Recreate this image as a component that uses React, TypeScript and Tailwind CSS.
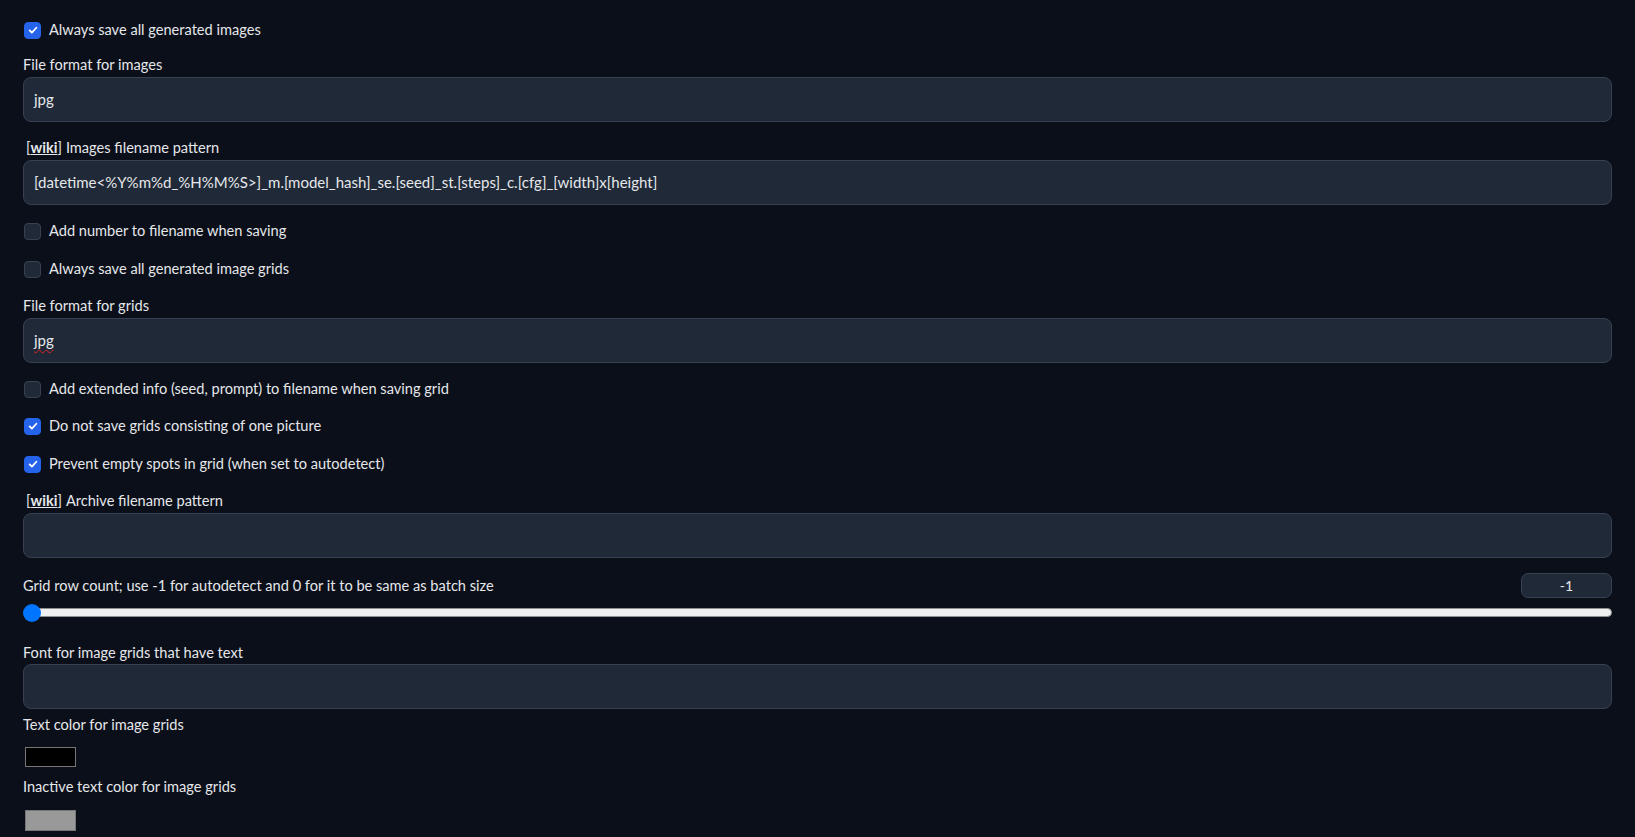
import React, { useState } from 'react';

const font = { fontFamily: '"Source Sans Pro", Lato, "Noto Sans", sans-serif' };

const Check: React.FC<{ label: string; checked?: boolean; className?: string }> = ({ label, checked, className }) => {
  const [on, setOn] = useState(!!checked);
  return (
    <label className={`flex h-[22px] items-center gap-[8px] cursor-pointer ${className ?? ''}`} onClick={() => setOn(!on)}>
      <span
        className={`flex h-[17px] w-[17px] ml-[1px] items-center justify-center rounded-[4px] border ${
          on ? 'bg-[#2563eb] border-[#2563eb]' : 'bg-[#1f2937] border-[#374151]'
        }`}
      >
        {on && (
          <svg viewBox="0 0 16 16" className="h-[12px] w-[12px]" fill="none" stroke="white" strokeWidth="2.4" strokeLinecap="round" strokeLinejoin="round">
            <path d="M3.5 8.5l3 3 6-6.5" />
          </svg>
        )}
      </span>
      <span className="text-[14.6px] text-[#e5e7eb]">{label}</span>
    </label>
  );
};

const Label: React.FC<{ children: React.ReactNode; className?: string }> = ({ children, className }) => (
  <div className={`flex h-[22px] items-center text-[14.6px] text-[#e5e7eb] ${className ?? ''}`}>{children}</div>
);

const Wiki = () => (
  <span className="ml-[3px] mr-[4px]">
    [<span className="font-bold underline">wiki</span>]
  </span>
);

const TextBox: React.FC<{ value?: string; squiggle?: boolean; className?: string }> = ({ value, squiggle, className }) => (
  <div className={`flex h-[45px] items-center rounded-[8px] border border-[#374151] bg-[#1f2937] px-[10px] text-[15px] text-[#e5e7eb] ${className ?? ''}`}>
    {squiggle ? <span className="underline decoration-wavy decoration-[#dc2626] decoration-[1px] underline-offset-[3px]">{value}</span> : value}
  </div>
);

export default function App() {
  return (
    <div className="min-h-screen w-full bg-[#0b0f19] px-[23px] pt-[19px] pb-[6px]" style={font}>
      <div className="flex flex-col">
        <Check label="Always save all generated images" checked />

        <Label className="mt-[13px]">File format for images</Label>
        <TextBox value="jpg" className="mt-[1px]" />

        <Label className="mt-[15px]">
          <Wiki />Images filename pattern
        </Label>
        <TextBox value="[datetime<%Y%m%d_%H%M%S>]_m.[model_hash]_se.[seed]_st.[steps]_c.[cfg]_[width]x[height]" className="mt-[1px]" />

        <Check label="Add number to filename when saving" className="mt-[15px]" />
        <Check label="Always save all generated image grids" className="mt-[16px]" />

        <Label className="mt-[15px]">File format for grids</Label>
        <TextBox value="jpg" squiggle className="mt-[1px]" />

        <Check label="Add extended info (seed, prompt) to filename when saving grid" className="mt-[15px]" />
        <Check label="Do not save grids consisting of one picture" checked className="mt-[15px]" />
        <Check label="Prevent empty spots in grid (when set to autodetect)" checked className="mt-[16px]" />

        <Label className="mt-[15px]">
          <Wiki />Archive filename pattern
        </Label>
        <TextBox className="mt-[1px]" />

        <div className="mt-[15px] flex h-[25px] items-center justify-between">
          <span className="text-[14.6px] text-[#e5e7eb]">Grid row count; use -1 for autodetect and 0 for it to be same as batch size</span>
          <div className="flex h-[25px] w-[91px] items-center justify-center rounded-[7px] border border-[#374151] bg-[#1f2937] text-[14px] text-[#e5e7eb]">
            -1
          </div>
        </div>

        <div className="relative mt-[6px] h-[18px]">
          <div className="absolute left-[1px] right-0 top-[4px] h-[9px] rounded-full border border-[#8f8f8f] bg-[#efefef]" />
          <div className="absolute left-0 top-0 h-[18px] w-[18px] rounded-full bg-[#0075ff]" />
        </div>

        <Label className="mt-[20px]">Font for image grids that have text</Label>
        <TextBox className="mt-[0px]" />

        <Label className="mt-[5px]">Text color for image grids</Label>
        <div className="mt-[11px] ml-[2px] h-[20px] w-[51px] border border-[#767676] bg-black" />

        <Label className="mt-[9px]">Inactive text color for image grids</Label>
        <div className="mt-[12px] ml-[2px] h-[21px] w-[51px] border border-[#767676] bg-[#999999]" />
      </div>
    </div>
  );
}
